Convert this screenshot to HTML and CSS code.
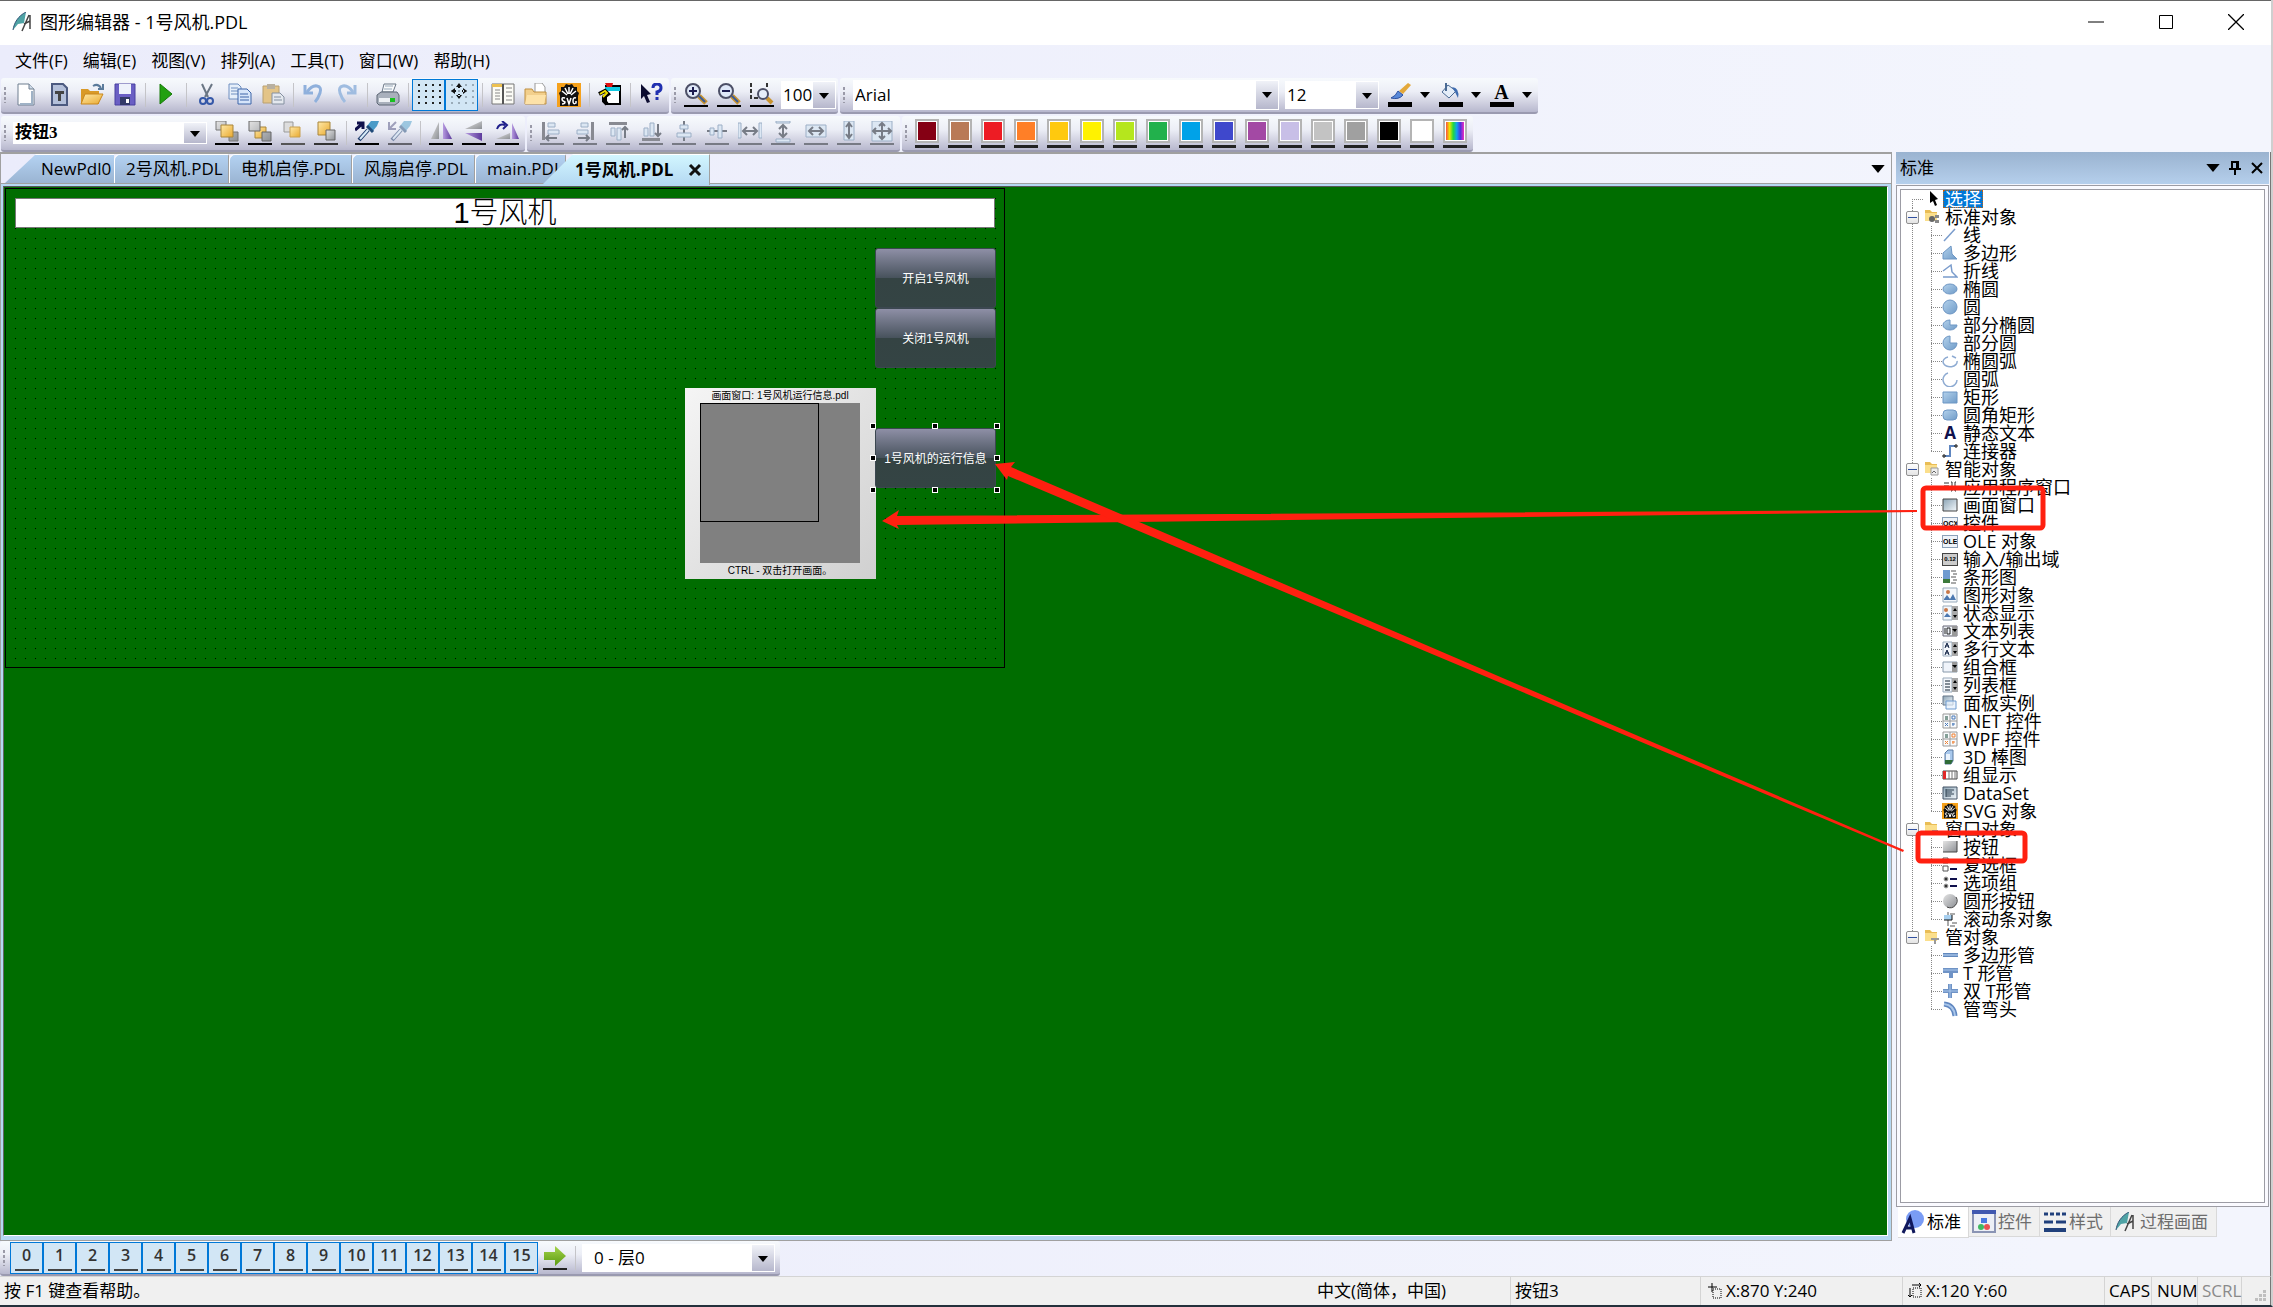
FILE: index.html
```html
<!DOCTYPE html>
<html lang="zh-CN">
<head>
<meta charset="utf-8">
<title>图形编辑器 - 1号风机.PDL</title>
<link rel="stylesheet" href="styles.css">
</head>
<body>
<svg class="defs" aria-hidden="true">
  <defs>
    <linearGradient id="blue" x1="0" y1="0" x2="1" y2="1"><stop offset="0" stop-color="#b4d2ec"/><stop offset="1" stop-color="#6f9bc8"/></linearGradient>
    <linearGradient id="gold" x1="0" y1="0" x2="1" y2="1"><stop offset="0" stop-color="#ffe9a8"/><stop offset="1" stop-color="#e9a92e"/></linearGradient>
    <linearGradient id="gray" x1="0" y1="0" x2="1" y2="1"><stop offset="0" stop-color="#e4e4e4"/><stop offset="1" stop-color="#8c8f94"/></linearGradient>
    <linearGradient id="paper" x1="0" y1="0" x2="1" y2="1"><stop offset="0" stop-color="#8ba3b4"/><stop offset="1" stop-color="#f4f9fd"/></linearGradient>
    <linearGradient id="violet" x1="0" y1="0" x2="1" y2="0"><stop offset="0" stop-color="#b79be0"/><stop offset="1" stop-color="#5c3a9c"/></linearGradient>
    <linearGradient id="leaf" x1="0" y1="0" x2="0" y2="1"><stop offset="0" stop-color="#a5d44c"/><stop offset="1" stop-color="#5a9a10"/></linearGradient>
    <linearGradient id="pipe" x1="0" y1="0" x2="0" y2="1"><stop offset="0" stop-color="#4a74ae"/><stop offset=".5" stop-color="#a9c6ea"/><stop offset="1" stop-color="#4a74ae"/></linearGradient>
    <symbol id="logo" viewBox="0 0 20 20"><path d="M1 18C2 11 6 4 14 0L12 11 6 12Z" fill="#4fa3a5"/><path d="M1 18C2 11 6 4 14 0" fill="none" stroke="#357"/><path d="M17 3L10 19M18 3V17M12 12L18 9" stroke="#444" fill="none" stroke-width="1.500"/></symbol>
    <symbol id="folder" viewBox="0 0 16 16"><path d="M1 1H6L8 3H13V12H1Z" fill="#e9bd55"/><path d="M1 4H13V12H1Z" fill="#fbdf8c"/></symbol>
    <symbol id="flower" viewBox="0 0 24 24"><path d="M0 0H24V24H0Z" fill="#f5a11c"/><path d="M3 23V13L2 10 4 8 4 4 7 4 9 1 12 2 15 1 17 4 20 4 20 8 22 10 21 13V23Z" fill="#111"/><path d="M12 11V4M11 11L8 5M13 11L16 5M10 12L5 8M14 12L19 8" stroke="#fff" stroke-width="1.500" fill="none"/><path d="M8 15Q5 14 5 16T8 19Q8 21 5 21M10 15L12 21 14 15M19 15Q16 14 16 18T19 20V18" stroke="#fff" stroke-width="1.500" fill="none"/></symbol>
    <symbol id="dropper" viewBox="0 0 24 24"><path d="M4 19L13 9" stroke="#1d3c6c" stroke-width="4"/><path d="M5 18L13 9" stroke="#d8ebf8" stroke-width="2"/><path d="M12 5L17 11 22 5 24 0H16Z" fill="#4a9bc8"/><path d="M12 5L18 11" stroke="#204a78" stroke-width="3"/></symbol>
    <symbol id="lens" viewBox="0 0 24 24"><path d="M15 13L22 20" stroke="#c8932e" stroke-width="5"/><path d="M15 13L21 19" stroke="#3a5c96" stroke-width="2"/><circle cx="9" cy="8" r="7" fill="#dfe8f8" stroke="#4c4f66" stroke-width="2"/></symbol>
    <symbol id="tri" viewBox="0 0 10 6"><path d="M0 0H10L5 6Z"/></symbol>
  </defs>
</svg>

<header class="titlebar">
  <svg class="i20"><use href="#logo"/></svg>
  <h1>图形编辑器 - 1号风机.PDL</h1>
  <button class="win" aria-label="最小化"><svg width="16" height="16"><path d="M0 8H16" stroke="#000"/></svg></button>
  <button class="win" aria-label="最大化"><svg width="16" height="16"><path d="M1.500 1.500H14.500V14.500H1.500Z" fill="none" stroke="#000"/></svg></button>
  <button class="win" aria-label="关闭"><svg width="16" height="16"><path d="M0 0L16 16M16 0L0 16" stroke="#000" stroke-width="1.300"/></svg></button>
</header>

<nav class="menu">
  <button>文件(F)</button><button>编辑(E)</button><button>视图(V)</button><button>排列(A)</button><button>工具(T)</button><button>窗口(W)</button><button>帮助(H)</button>
</nav>

<div class="bars">
  <div class="bar">
    <i class="grip"></i>
    <button class="tb" aria-label="新建"><svg viewBox="0 0 24 24"><path d="M4 1H15L20 6V22H4Z" fill="#fff" stroke="#6f7f90"/><path d="M15 1V6H20" fill="#cfdbe8" stroke="#6f7f90"/><path d="M18 8V21H6" stroke="#9fb2c6" stroke-width="2" fill="none"/></svg></button>
    <button class="tb" aria-label="模板"><svg viewBox="0 0 24 24"><path d="M5 1H16L20 5V22H5Z" fill="#b4c0da" stroke="#4c5a80" stroke-width="2"/><path d="M8 8H17V11H14V18H11V11H8Z" fill="#444"/></svg></button>
    <button class="tb" aria-label="打开"><svg viewBox="0 0 24 24"><path d="M1 6H8L10 8H19V21H1Z" fill="#d99a28"/><path d="M5 11H23L18 21H1Z" fill="url(#gold)" stroke="#c8871c"/><path d="M13 3Q18 0 21 5M23 1V6H18" stroke="#5a7a9a" stroke-width="2" fill="none"/></svg></button>
    <button class="tb" aria-label="保存"><svg viewBox="0 0 24 24"><path d="M2 1H22V22H2Z" fill="#6a5fc4" stroke="#4840a0"/><path d="M6 1H18V11H6Z" fill="#eef2fb"/><path d="M7 14H17V22H7Z" fill="#333a68"/><path d="M13 16H16V20H13Z" fill="#fff"/></svg></button>
    <i class="sep"></i>
    <button class="tb" aria-label="运行"><svg viewBox="0 0 24 24"><path d="M6 1L18 11 6 21Z" fill="#22a010" stroke="#167a08"/></svg></button>
    <i class="sep"></i>
    <button class="tb" aria-label="剪切"><svg viewBox="0 0 24 24"><path d="M7 1L13 14M17 1L10 14" stroke="#6a7684" stroke-width="2"/><circle cx="8" cy="18" r="3" fill="none" stroke="#3558a8" stroke-width="2"/><circle cx="15" cy="18" r="3" fill="none" stroke="#3558a8" stroke-width="2"/></svg></button>
    <button class="tb" aria-label="复制"><svg viewBox="0 0 24 24"><path d="M1 1H10L13 4V16H1Z" fill="#e6effa" stroke="#6f8fc0"/><path d="M3 5H10M3 8H10M3 11H10" stroke="#6f8fc0"/><path d="M10 6H19L23 10V21H10Z" fill="#d6e5fa" stroke="#3d65a8"/><path d="M12 11H20M12 14H21M12 17H21" stroke="#3d65a8"/></svg></button>
    <button class="tb" aria-label="粘贴"><svg viewBox="0 0 24 24"><path d="M2 3H18V20H2Z" fill="#e3c488" stroke="#b9a070"/><path d="M6 1H14V6H6Z" fill="#b8b0a0"/><path d="M11 10H19L23 14V21H11Z" fill="#e4e8ee" stroke="#8490a0"/><path d="M13 14H20M13 17H21" stroke="#8490a0"/></svg></button>
    <i class="sep"></i>
    <button class="tb" aria-label="撤消"><svg viewBox="0 0 24 24"><path d="M3 2V10H11" fill="none" stroke="#8fb0dc" stroke-width="3"/><path d="M5 9Q10 2 15 3T18 10 13 19" stroke="#8fb0dc" stroke-width="3" fill="none"/></svg></button>
    <button class="tb" aria-label="重做"><svg viewBox="0 0 24 24"><path d="M20 2V10H12" fill="none" stroke="#9fbce0" stroke-width="3"/><path d="M18 9Q13 2 8 3T5 10 10 19" stroke="#9fbce0" stroke-width="3" fill="none"/></svg></button>
    <i class="sep"></i>
    <button class="tb" aria-label="打印"><svg viewBox="0 0 24 24"><path d="M8 1H20L17 9H6Z" fill="#f8fafc" stroke="#6c7888"/><path d="M9 3H17M8 6H16" stroke="#9ab"/><path d="M1 12L5 9H21L23 12V19L19 22H3L1 20Z" fill="#a9b0bc" stroke="#5c6674"/><path d="M3 15H14V19H3Z" fill="#eef1f5"/><path d="M14 15H19V19H14Z" fill="#18c020"/></svg></button>
    <i class="sep"></i>
    <button class="tb on" aria-label="显示网格"><svg viewBox="0 0 24 24"><path d="M1 2H24M1 8H24M1 14H24M1 20H24" stroke="#222" stroke-width="2" stroke-dasharray="2 5"/></svg></button>
    <button class="tb on" aria-label="对齐网格"><svg viewBox="0 0 24 24"><path d="M1 2H24M1 8H24M1 14H24M1 20H24" stroke="#9aabb8" stroke-width="2" stroke-dasharray="2 5"/><path d="M9 0L12 4H6ZM9 16L12 12H6ZM1 8L5 5V11ZM17 8L13 5V11ZM8 3H10V5H8ZM8 11H10V13H8ZM4 7H6V9H4ZM12 7H14V9H12Z" fill="#111"/></svg></button>
    <i class="sep"></i>
    <button class="tb" aria-label="属性"><svg viewBox="0 0 24 24"><path d="M1 1H23V21H1Z" fill="#fbfbf6" stroke="#777"/><path d="M1 1H12V4H1Z" fill="#ecc050"/><path d="M12 1V21" stroke="#555" stroke-width="2"/><path d="M4 7H9M4 10H9M4 13H9M4 16H9M15 5H21M15 9H21M15 13H21M15 17H21" stroke="#888"/></svg></button>
    <button class="tb" aria-label="库"><svg viewBox="0 0 24 24"><path d="M11 0H18L21 4V16H11Z" fill="#fff" stroke="#999"/><path d="M1 6H8L10 9H22V21H1Z" fill="#f2cf8c" stroke="#bf9040"/><path d="M3 12H22L20 21H1Z" fill="#fde2a8"/></svg></button>
    <button class="tb" aria-label="SVG 库"><svg><use href="#flower"/></svg></button>
    <i class="sep"></i>
    <button class="tb" aria-label="动态向导"><svg viewBox="0 0 24 24"><path d="M8 3H22V21H8Z" fill="#fff" stroke="#000" stroke-width="2"/><path d="M7 4H22V8H7Z" fill="#10c8e0"/><path d="M7 0H15L14 4 9 4Z" fill="#e01010"/><path d="M1 11L7 8 10 11 6 14V18L9 21" stroke="#000" stroke-width="4" fill="none"/><path d="M2 11L7 8 9 10 5 14" stroke="#f0e000" stroke-width="2" fill="none"/></svg></button>
    <i class="sep"></i>
    <button class="tb" aria-label="直接帮助"><svg viewBox="0 0 24 24"><path d="M2 1L12 11 8 12 11 19 8 20 5 13 2 16Z" fill="#0c0c30"/><path d="M14 5Q14 1 18 1T22 5Q22 8 18 9V12M18 14V17" stroke="#2030b0" stroke-width="3" fill="none"/></svg></button>
  </div>
  <div class="bar">
    <i class="grip"></i>
    <button class="tb" aria-label="放大"><svg viewBox="0 0 24 24"><use href="#lens"/><path d="M5 8H13M9 4V12" stroke="#1c1c50" stroke-width="2"/><path d="M0 22H24V24H0Z"/></svg></button>
    <button class="tb" aria-label="缩小"><svg viewBox="0 0 24 24"><use href="#lens"/><path d="M5 8H13" stroke="#1c1c50" stroke-width="2"/><path d="M0 22H24V24H0Z"/></svg></button>
    <button class="tb" aria-label="缩放区域"><svg viewBox="0 0 24 24"><path d="M1 0V15H8M17 0V4" stroke="#333" stroke-width="2" stroke-dasharray="4 2" fill="none"/><path d="M17 15L22 20" stroke="#c8932e" stroke-width="4"/><circle cx="13" cy="11" r="5" fill="#e6edf8" stroke="#4c4f66" stroke-width="2"/><path d="M0 22H24V24H0Z"/></svg></button>
    <span class="combo zoom"><select aria-label="缩放"><option>100</option></select></span>
  </div>
  <div class="bar">
    <i class="grip"></i>
    <span class="combo font"><select aria-label="字体"><option>Arial</option></select></span>
    <span class="combo size"><select aria-label="字号"><option>12</option></select></span>
    <button class="tb split" aria-label="线颜色"><svg viewBox="0 0 24 24"><path d="M20 0L23 2 15 11 11 8Z" fill="#e3a83a"/><path d="M10 8L15 12Q11 17 3 15 8 13 10 8Z" fill="#5888d8" stroke="#2c50a0"/><path d="M0 19H24V24H0Z"/></svg><svg class="arrow"><use href="#tri"/></svg></button>
    <button class="tb split" aria-label="填充颜色"><svg viewBox="0 0 24 24"><path d="M9 2L17 8 10 15 3 9Z" fill="#e4edf8" stroke="#4a6a94"/><path d="M7 0V8" stroke="#4a6a94" stroke-width="2"/><path d="M13 4Q21 5 19 15L16 9Z" fill="#3f6cb0"/><path d="M0 19H24V24H0Z"/></svg><svg class="arrow"><use href="#tri"/></svg></button>
    <button class="tb split" aria-label="字体颜色"><span class="letter">A</span><svg class="arrow"><use href="#tri"/></svg></button>
  </div>
</div>

<div class="bars">
  <div class="bar">
    <i class="grip"></i>
    <span class="combo object"><select aria-label="对象"><option>按钮3</option></select></span>
    <button class="tb" aria-label="置于最前"><svg viewBox="0 0 24 24"><path d="M1 0H11V9H1ZM14 11H23V20H14Z" fill="url(#gray)" stroke="#777"/><path d="M6 4H18V16H6Z" fill="url(#gold)" stroke="#a8853a"/><path d="M0 22H24V24H0Z"/></svg></button>
    <button class="tb" aria-label="置于最后"><svg viewBox="0 0 24 24"><path d="M7 6H18V17H7Z" fill="url(#gold)" stroke="#a8853a"/><path d="M1 0H12V10H1ZM14 11H23V20H14Z" fill="url(#gray)" stroke="#666"/><path d="M0 22H24V24H0Z"/></svg></button>
    <button class="tb" aria-label="前移"><svg viewBox="0 0 24 24"><path d="M3 1H12V11H3Z" fill="#ddd" stroke="#999"/><path d="M9 6H19V16H9Z" fill="url(#gold)" stroke="#c8a050"/><path d="M0 22H24V24H0Z" fill="#555"/></svg></button>
    <button class="tb" aria-label="后移"><svg viewBox="0 0 24 24"><path d="M4 1H16V14H4Z" fill="url(#gold)" stroke="#a8853a"/><path d="M12 9H21V19H12Z" fill="url(#gray)" stroke="#666"/><path d="M0 22H24V24H0Z" fill="#333"/></svg></button>
    <i class="sep"></i>
    <button class="tb" aria-label="复制属性"><svg viewBox="0 0 24 24"><use href="#dropper"/><path d="M0 9L7 3M2 2H8V8" stroke="#10104c" stroke-width="3" fill="none"/><path d="M0 22H24V24H0Z"/></svg></button>
    <button class="tb dim" aria-label="分配属性"><svg viewBox="0 0 24 24"><use href="#dropper"/><path d="M8 1L2 7M1 1V8H8" stroke="#505080" stroke-width="2" fill="none"/><path d="M0 22H24V24H0Z"/></svg></button>
    <i class="sep"></i>
    <button class="tb" aria-label="水平镜像"><svg viewBox="0 0 24 24"><path d="M10 1V18H2Z" fill="url(#gray)"/><path d="M14 1V18H23Z" fill="url(#violet)"/><path d="M0 22H24V24H0Z"/></svg></button>
    <button class="tb" aria-label="垂直镜像"><svg viewBox="0 0 24 24"><path d="M3 8L20 0V8Z" fill="url(#gray)"/><path d="M3 12H20V20Z" fill="url(#violet)"/><path d="M0 22H24V24H0Z"/></svg></button>
    <button class="tb" aria-label="旋转"><svg viewBox="0 0 24 24"><path d="M15 12V18H1Z" fill="url(#gray)"/><path d="M17 2V18H24Z" fill="url(#violet)"/><path d="M2 8Q4 2 10 4M7 0L12 4 8 8" stroke="#20208c" stroke-width="2" fill="none"/><path d="M0 22H24V24H0Z"/></svg></button>
  </div>
  <div class="bar">
    <i class="grip"></i>
    <button class="tb al" aria-label="左对齐"><svg viewBox="0 0 24 24"><path class="g" d="M2 1H5V19H2Z"/><path class="b" d="M8 2H15V6H8ZM8 9H19V13H8Z"/><path class="a" d="M6 17H17M9 14L6 17 9 20"/><path class="u" d="M0 22H24V24H0Z"/></svg></button>
    <button class="tb al" aria-label="右对齐"><svg viewBox="0 0 24 24"><path class="g" d="M18 1H21V19H18Z"/><path class="b" d="M8 2H15V6H8ZM4 9H15V13H4Z"/><path class="a" d="M5 17H16M13 14L16 17 13 20"/><path class="u" d="M0 22H24V24H0Z"/></svg></button>
    <button class="tb al" aria-label="上对齐"><svg viewBox="0 0 24 24"><path class="g" d="M3 1H21V4H3Z"/><path class="b" d="M5 7H9V15H5ZM11 7H15V19H11Z"/><path class="a" d="M19 6V17M16 9L19 6 22 9"/><path class="u" d="M0 22H24V24H0Z"/></svg></button>
    <button class="tb al" aria-label="下对齐"><svg viewBox="0 0 24 24"><path class="g" d="M3 17H21V20H3Z"/><path class="b" d="M5 7H9V15H5ZM11 2H15V15H11Z"/><path class="a" d="M19 3V15M16 12L19 15 22 12"/><path class="u" d="M0 22H24V24H0Z"/></svg></button>
    <button class="tb al" aria-label="水平居中"><svg viewBox="0 0 24 24"><path class="a" d="M12 0V20"/><path class="b" d="M8 4H16V8H8ZM5 12H19V16H5Z"/><path class="u" d="M0 22H24V24H0Z"/></svg></button>
    <button class="tb al" aria-label="垂直居中"><svg viewBox="0 0 24 24"><path class="a" d="M2 10H22"/><path class="b" d="M5 7H9V14H5ZM13 4H17V17H13Z"/><path class="u" d="M0 22H24V24H0Z"/></svg></button>
    <button class="tb al" aria-label="水平等距"><svg viewBox="0 0 24 24"><path class="b" d="M0 2H3V17H0ZM21 2H24V17H21Z"/><path class="a" d="M5 10H19M9 6L5 10 9 14M15 6L19 10 15 14"/><path class="u" d="M0 22H24V24H0Z"/></svg></button>
    <button class="tb al" aria-label="垂直等距"><svg viewBox="0 0 24 24"><path class="b" d="M5 0H19V2H5ZM5 18H19V21H5Z"/><path class="a" d="M12 4V16M8 8L12 4 16 8M8 12L12 16 16 12"/><path class="u" d="M0 22H24V24H0Z"/></svg></button>
    <button class="tb al" aria-label="等宽"><svg viewBox="0 0 24 24"><path class="b" d="M2 4H22V16H2Z"/><path class="a" d="M5 10H19M9 6L5 10 9 14M15 6L19 10 15 14"/><path class="u" d="M0 22H24V24H0Z"/></svg></button>
    <button class="tb al" aria-label="等高"><svg viewBox="0 0 24 24"><path class="b" d="M7 0H17V19H7Z"/><path class="a" d="M12 2V17M9 6L12 2 15 6M9 13L12 17 15 13"/><path class="u" d="M0 22H24V24H0Z"/></svg></button>
    <button class="tb al" aria-label="等宽等高"><svg viewBox="0 0 24 24"><path class="b" d="M2 0H22V20H2Z"/><path class="a" d="M3 10H21M12 2V18M6 7L3 10 6 13M18 7L21 10 18 13M9 5L12 2 15 5M9 15L12 18 15 15"/><path class="u" d="M0 22H24V24H0Z"/></svg></button>
  </div>
  <div class="bar">
    <i class="grip"></i>
    <button class="tb sw c1" aria-label="深红"></button><button class="tb sw c2" aria-label="棕色"></button><button class="tb sw c3" aria-label="红色"></button><button class="tb sw c4" aria-label="橙色"></button><button class="tb sw c5" aria-label="金色"></button><button class="tb sw c6" aria-label="黄色"></button><button class="tb sw c7" aria-label="黄绿"></button><button class="tb sw c8" aria-label="绿色"></button><button class="tb sw c9" aria-label="天蓝"></button><button class="tb sw c10" aria-label="靛蓝"></button><button class="tb sw c11" aria-label="紫色"></button><button class="tb sw c12" aria-label="淡紫"></button><button class="tb sw c13" aria-label="浅灰"></button><button class="tb sw c14" aria-label="灰色"></button><button class="tb sw c15" aria-label="黑色"></button><button class="tb sw c16" aria-label="白色"></button><button class="tb sw c17" aria-label="更多颜色"></button>
  </div>
</div>

<main class="work">
  <section class="docs">
    <div class="tabs">
      <button class="tab slant t1">NewPdl0</button><button class="tab t2">2号风机.PDL</button><button class="tab t3">电机启停.PDL</button><button class="tab t3">风扇启停.PDL</button><button class="tab t4">main.PDL</button><button class="tab slant active">1号风机.PDL<svg width="14" height="14"><path d="M2 2L12 12M12 2L2 12" stroke="#111" stroke-width="3"/></svg></button>
      <button class="tablist" aria-label="窗口列表"><svg width="14" height="8"><use href="#tri"/></svg></button>
    </div>
    <div class="frame">
      <div class="canvas">
        <div class="pdl">
          <div class="caption">1号风机</div>
          <button class="pb open">开启1号风机</button>
          <button class="pb shut">关闭1号风机</button>
          <div class="picwin"><span>画面窗口: 1号风机运行信息.pdl</span><div class="pic"><div class="sub"></div></div><span>CTRL - 双击打开画面。</span></div>
          <button class="pb info">1号风机的运行信息</button>
          <div class="handles"><i></i><i></i><i></i><i></i><b></b><i></i><i></i><i></i><i></i></div>
        </div>
      </div>
    </div>
  </section>

  <aside class="panel">
    <header><h2>标准</h2><svg width="14" height="8"><use href="#tri"/></svg><svg width="12" height="14"><path d="M3 1H9V8H3ZM0 8H12M6 8V14M8 1V8" stroke="#000" stroke-width="2" fill="none"/></svg><svg width="14" height="14"><path d="M2 2L12 12M12 2L2 12" stroke="#000" stroke-width="2"/></svg></header>
    <div class="well"><div class="treebox">
      <ul class="tree">
        <li class="first"><svg viewBox="0 0 16 16"><path d="M4 0L12 8 9 9 11 14 9 15 7 10 4 12Z"/></svg><mark>选择</mark></li>
        <li class="grp"><i class="ex"></i><svg viewBox="0 0 16 16"><use href="#folder"/><circle cx="8" cy="10" r="3" fill="#666"/><path d="M11 6H15V9H11ZM11 11H15V14H11Z" fill="#888"/></svg>标准对象
        <ul>
          <li><svg viewBox="0 0 16 16"><path d="M2 14L13 2" stroke="#7a9ccc" stroke-width="1.500"/></svg>线</li>
          <li><svg viewBox="0 0 16 16"><path d="M1 14V8L9 1 10 9 15 14Z" fill="url(#blue)" stroke="#6d96c4"/></svg>多边形</li>
          <li><svg viewBox="0 0 16 16"><path d="M1 8L9 2 10 9 15 14H1" fill="none" stroke="#7a9ccc" stroke-width="1.500"/></svg>折线</li>
          <li><svg viewBox="0 0 16 16"><ellipse cx="8" cy="8" rx="7" ry="5" fill="url(#blue)" stroke="#6d96c4"/></svg>椭圆</li>
          <li><svg viewBox="0 0 16 16"><circle cx="8" cy="8" r="7" fill="url(#blue)" stroke="#6d96c4"/></svg>圆</li>
          <li><svg viewBox="0 0 16 16"><path d="M8 3A7 5 0 1 0 15 8H8Z" fill="url(#blue)" stroke="#6d96c4"/></svg>部分椭圆</li>
          <li><svg viewBox="0 0 16 16"><path d="M8 1A7 7 0 1 0 15 8H8Z" fill="url(#blue)" stroke="#6d96c4"/></svg>部分圆</li>
          <li><svg viewBox="0 0 16 16"><path d="M6 4A7 5 0 1 0 15 8M10 3L14 5" fill="none" stroke="#8eabd2" stroke-width="1.500"/></svg>椭圆弧</li>
          <li><svg viewBox="0 0 16 16"><path d="M6 2A7 7 0 1 0 15 9" fill="none" stroke="#8eabd2" stroke-width="1.500"/></svg>圆弧</li>
          <li><svg viewBox="0 0 16 16"><path d="M1 3H15V14H1Z" fill="url(#blue)" stroke="#6d96c4"/></svg>矩形</li>
          <li><svg viewBox="0 0 16 16"><rect x="1" y="3" width="14" height="10" rx="4" fill="url(#blue)" stroke="#6d96c4"/></svg>圆角矩形</li>
          <li><span class="ch">A</span>静态文本</li>
          <li><svg viewBox="0 0 16 16"><path d="M2 13H8V3H14" fill="none" stroke="#5f86c0" stroke-width="2"/><path d="M1 12H3V14H1ZM13 2H15V4H13Z" fill="#fff" stroke="#111"/></svg>连接器</li>
        </ul></li>
        <li class="grp"><i class="ex"></i><svg viewBox="0 0 16 16"><use href="#folder"/><path d="M7 7H14V14H7Z" fill="#eee" stroke="#999"/><path d="M8 12L10 10 12 12" stroke="#666" fill="none"/></svg>智能对象
        <ul>
          <li><svg viewBox="0 0 16 16"><path d="M2 4H7M2 7H7M2 10H7M9 3H10V12H9M14 3H13V12H14" stroke="#333" fill="none"/></svg>应用程序窗口</li>
          <li><svg viewBox="0 0 16 16"><path d="M1 2H15V14H1Z" fill="url(#paper)" stroke="#444"/></svg>画面窗口</li>
          <li><span class="tag">OCX</span>控件</li>
          <li><span class="tag">OLE</span>OLE 对象</li>
          <li><span class="tag io">0.12</span>输入/输出域</li>
          <li><svg viewBox="0 0 16 16"><path d="M1 1H8V10H1Z" fill="#6f9bd0"/><path d="M1 10H8V14H1Z" fill="#3c7a3c"/><path d="M9 2H14M11 5H15M9 8H14M11 11H15M9 14H14" stroke="#555"/></svg>条形图</li>
          <li><svg viewBox="0 0 16 16"><path d="M1 1H15V15H1Z" fill="#f4f7fb" stroke="#9ab"/><path d="M2 12L5 8 8 12 11 7 14 13H2Z" fill="#4c78b0"/><circle cx="6" cy="5" r="2" fill="#c87848"/></svg>图形对象</li>
          <li><svg viewBox="0 0 16 16"><path d="M1 1H10V15H1Z" fill="#f4f7fb" stroke="#9ab"/><path d="M2 12L5 8 9 12Z" fill="#4c78b0"/><circle cx="4" cy="5" r="2" fill="#c87848"/><path d="M10 1H16V15H10Z" fill="#aaa"/><path d="M11 6L13 3 15 6ZM11 10H15L13 13Z"/></svg>状态显示</li>
          <li><svg viewBox="0 0 16 16"><path d="M1 3H15V13H1Z" fill="#eef2f7" stroke="#667"/><path d="M3 5V11M5 5H8V11H5Z" stroke="#222" fill="none"/><path d="M10 3H15V13H10Z" fill="#999"/><path d="M10 6H15L13 9Z"/></svg>文本列表</li>
          <li><svg viewBox="0 0 16 16"><path d="M1 1H10V15H1Z" fill="#f4f7fb" stroke="#9ab"/><path d="M3 7L5 2 7 7M3 5H7M3 14L5 9 7 14M3 12H7" stroke="#124" fill="none"/><path d="M10 1H16V15H10Z" fill="#aaa"/><path d="M11 6L13 3 15 6ZM11 10H15L13 13Z"/></svg>多行文本</li>
          <li><svg viewBox="0 0 16 16"><path d="M1 3H15V13H1Z" fill="#f0f4fa" stroke="#89a"/><path d="M10 3H15V13H10Z" fill="#999"/><path d="M10 6H15L13 9Z"/></svg>组合框</li>
          <li><svg viewBox="0 0 16 16"><path d="M1 1H10V15H1Z" fill="#f4f7fb" stroke="#9ab"/><path d="M3 4H8M3 7H8M3 10H8M3 13H8" stroke="#123"/><path d="M10 1H16V15H10Z" fill="#aaa"/><path d="M11 6L13 3 15 6ZM11 10H15L13 13Z"/></svg>列表框</li>
          <li><svg viewBox="0 0 16 16"><path d="M1 1H11V10H1Z" fill="url(#paper)" stroke="#678"/><path d="M4 6H14V14H4Z" fill="#e4effc" fill-opacity=".7" stroke="#6f9bd0"/></svg>面板实例</li>
          <li><svg viewBox="0 0 16 16"><path d="M1 1H15V15H1ZM8 1V15M1 8H15" fill="#f8fafc" stroke="#999"/><path d="M3 4H6M3 6H6" stroke="#143"/><path d="M10 3H13V6H10ZM10 11H13M11 10V13M3 10L6 13M6 10L3 13" stroke="#4878b8" fill="none"/></svg>.NET 控件</li>
          <li><svg viewBox="0 0 16 16"><path d="M1 1H15V15H1ZM8 1V15M1 8H15" fill="#f8fafc" stroke="#999"/><path d="M3 4H6M3 6H6" stroke="#143"/><path d="M10 3H13V6H10ZM10 11H13M11 10V13M3 10L6 13M6 10L3 13" stroke="#f08030" fill="none"/></svg>WPF 控件</li>
          <li><svg viewBox="0 0 16 16"><path d="M3 4L6 1H11V12L9 15H3Z" fill="#a8c8ec" stroke="#5878a0"/><path d="M4 5H8V11H4Z" fill="#eaf3fc"/><path d="M3 11H11L9 15H3Z" fill="#2f6b38"/></svg>3D 棒图</li>
          <li><svg viewBox="0 0 16 16"><path d="M1 4H15V12H1Z" fill="#fff" stroke="#444"/><path d="M1 4H4V12H1Z" fill="#e02828"/><path d="M7 4V12M10 4V12M13 4V12" stroke="#777"/></svg>组显示</li>
          <li><svg viewBox="0 0 16 16"><path d="M1 2H15V14H1Z" fill="url(#paper)" stroke="#456"/><path d="M4 4V12M4 5H12M4 7H10M4 9H12M4 11H9" stroke="#345"/></svg>DataSet</li>
          <li><svg viewBox="0 0 16 16"><use href="#flower"/></svg>SVG 对象</li>
        </ul></li>
        <li class="grp"><i class="ex"></i><svg viewBox="0 0 16 16"><use href="#folder"/><path d="M8 9H14V13H8Z" fill="#999"/></svg>窗口对象
        <ul>
          <li><svg viewBox="0 0 16 16"><path d="M1 2H15V13H1Z" fill="url(#gray)"/><path d="M1 13H15V2" fill="none" stroke="#444"/></svg>按钮</li>
          <li><svg viewBox="0 0 16 16"><path d="M1 1H6V6H1ZM1 9H6V14H1Z" fill="#fff" stroke="#555"/><path d="M8 4H15M8 12H15" stroke="#10104c" stroke-width="2"/></svg>复选框</li>
          <li><svg viewBox="0 0 16 16"><circle cx="4" cy="4" r="2" fill="#333" stroke="#aaa"/><circle cx="4" cy="11" r="2" fill="#333" stroke="#aaa"/><path d="M8 4H15M8 11H15" stroke="#10104c" stroke-width="2"/></svg>选项组</li>
          <li><svg viewBox="0 0 16 16"><circle cx="8" cy="8" r="7" fill="url(#gray)"/><path d="M14 4A7 7 0 0 1 5 14" fill="none" stroke="#444"/></svg>圆形按钮</li>
          <li><svg viewBox="0 0 16 16"><path d="M6 1V15M8 3H13M10 12H15M8 15H13" stroke="#aaa" stroke-width="2"/><path d="M2 4H10V9H2Z" fill="#a8d0f0"/><path d="M2 9H10V4" stroke="#111" fill="none"/></svg>滚动条对象</li>
        </ul></li>
        <li class="grp"><i class="ex"></i><svg viewBox="0 0 16 16"><use href="#folder"/><path d="M7 10H15M11 10V15" stroke="#999" stroke-width="2"/></svg>管对象
        <ul>
          <li><svg viewBox="0 0 16 16"><path d="M1 6H16V10H1Z" fill="url(#pipe)"/></svg>多边形管</li>
          <li><svg viewBox="0 0 16 16"><path d="M1 3H16V8H11V13H7V8H1Z" fill="#6f93c6"/><path d="M1 5H16" stroke="#a9c6ea"/></svg>T 形管</li>
          <li><svg viewBox="0 0 16 16"><path d="M6 1H10V6H16V10H10V15H6V10H1V6H6Z" fill="#6f93c6"/><path d="M1 8H16M8 1V15" stroke="#a9c6ea"/></svg>双 T形管</li>
          <li><svg viewBox="0 0 16 16"><path d="M2 3Q12 4 13 15" fill="none" stroke="#5f86c0" stroke-width="5"/><path d="M2 3Q12 4 13 15" fill="none" stroke="#a9c6ea" stroke-width="2"/></svg>管弯头</li>
        </ul></li>
      </ul>
    </div></div>
    <div class="ptabs">
      <button class="cur"><svg viewBox="0 0 24 24"><circle cx="14" cy="9" r="9" fill="#7a9cf4"/><path d="M2 23L9 8 13 23M4 18H12" stroke="#10185c" stroke-width="3" fill="none"/></svg>标准</button>
      <button><svg viewBox="0 0 24 24"><path d="M1 1H23V22H1Z" fill="#eceff6" stroke="#8a94b4" stroke-width="2"/><path d="M0 0H24V4H0Z" fill="#4058b0"/><path d="M9 8H15V13H9Z" fill="#4878e0"/><circle cx="9" cy="17" r="3" fill="#40b860"/><circle cx="15" cy="17" r="3" fill="#e85050"/></svg>控件</button>
      <button><svg viewBox="0 0 24 24"><path d="M1 4H23" stroke="#20407c" stroke-width="3" stroke-dasharray="4 2"/><path d="M1 12H10M13 12H23" stroke="#20407c" stroke-width="3"/><path d="M1 20H23" stroke="#20407c" stroke-width="4"/></svg>样式</button>
      <button class="wide"><svg><use href="#logo"/></svg>过程画面</button>
    </div>
  </aside>
</main>

<div class="bars layers">
  <div class="bar">
    <i class="grip"></i>
    <div class="lays"><button>0</button><button>1</button><button>2</button><button>3</button><button>4</button><button>5</button><button>6</button><button>7</button><button>8</button><button>9</button><button>10</button><button>11</button><button>12</button><button>13</button><button>14</button><button>15</button></div>
    <button class="tb" aria-label="应用图层"><svg viewBox="0 0 24 24"><path d="M1 6H12V0L23 10 12 20V14H1Z" fill="url(#leaf)"/><path d="M0 22H24V24H0Z" fill="#222"/></svg></button>
    <i class="sep"></i>
    <span class="combo layer"><select aria-label="图层"><option>0 - 层0</option></select></span>
  </div>
</div>

<footer class="status">
  <span class="help">按 F1 键查看帮助。</span>
  <span class="lang">中文(简体，中国)</span>
  <span class="obj">按钮3</span>
  <span class="pos"><svg width="14" height="16"><path d="M0 4H9M4 0V9" stroke="#000"/><path d="M5 6H13V15H5V6" fill="none" stroke="#000" stroke-dasharray="1 1"/></svg>X:870 Y:240</span>
  <span class="dim2"><svg width="14" height="16"><path d="M4 2H13M11 0L13 2 11 4M2 5V14M0 12L2 14 4 12" stroke="#000" fill="none"/><path d="M5 5H13V14H5V5" fill="none" stroke="#000" stroke-dasharray="1 1"/></svg>X:120 Y:60</span>
  <span class="caps">CAPS</span><span class="num">NUM</span><span class="scrl">SCRL</span>
  <span class="resize"><svg width="12" height="12"><path d="M8 0H11V3H8ZM4 4H7V7H4ZM8 4H11V7H8ZM0 8H3V11H0ZM4 8H7V11H4ZM8 8H11V11H8Z" fill="#bfbfbf"/></svg></span>
</footer>

<svg class="notes" width="2060" height="880" aria-hidden="true">
  <path d="M882 521L899 510 897 516 1917 510V512L897 525 899 529Z"/>
  <path d="M995 464L1015 462 1011 467 1904 850 1903 852 1008 476 1007 480Z"/>
  <rect x="1923" y="488" width="120" height="40" rx="3"/>
  <rect x="1918" y="833" width="107" height="28" rx="3"/>
</svg>
</body>
</html>
```
FILE: styles.css
```css
* { box-sizing: border-box; }
body {
  margin: 0;
  min-height: 100vh;
  display: flex;
  flex-direction: column;
  position: relative;
  font: 17px/24px "Open Sans", "Noto Sans CJK SC", sans-serif;
  color: #000;
  background: linear-gradient(90deg, #ebecfb, #f3f5fd 90%);
  border-right: 2px solid #cfcfcf;
  border-bottom: 2px solid #24303c;
}
button, select { font: inherit; color: inherit; border: 0; padding: 0; margin: 0; background: none; border-radius: 0; }
h1, h2 { margin: 0; font-weight: 400; font-size: 18px; }
svg { display: block; flex: none; }
.defs { position: absolute; width: 0; height: 0; }

.titlebar { height: 45px; flex: none; display: flex; align-items: center; padding: 0 0 2px 12px; background: #fff; border-top: 1px solid #666; }
.titlebar h1 { flex: 1; margin-left: 8px; }
.i20 { width: 20px; height: 20px; }
.win { width: 70px; height: 42px; display: flex; align-items: center; justify-content: center; }

.menu { height: 33px; flex: none; display: flex; gap: 15px; padding: 0 15px 2px; align-items: center; }

.bars { display: flex; gap: 2px; padding-left: 1px; height: 36px; flex: none; }
.bars + .bars { margin-top: 2px; }
.bar {
  display: flex;
  align-items: center;
  padding-right: 2px;
  border-bottom: 2px solid #9a9ab0;
  border-radius: 3px;
  background: linear-gradient(#f7fafd, #eceef6 40%, #b8b8ce);
}
.grip { width: 2px; height: 16px; margin: 0 3px; background: repeating-linear-gradient(#9a9aa8 0 3px, transparent 3px 5px); }
.tb { width: 33px; height: 32px; display: flex; align-items: center; justify-content: center; }
.tb svg { width: 24px; height: 24px; }
.tb.on { background: #d2e6f5; border: 1px solid #0078d7; }
.tb.dim svg { opacity: .5; }
.tb.split { width: 51px; gap: 8px; }
.tb .arrow { width: 10px; height: 6px; }
.letter { width: 24px; height: 24px; border-bottom: 5px solid #000; font: bold 20px/18px "Liberation Serif", serif; text-align: center; }
.sep { width: 1px; height: 24px; margin: 0 3px 0 4px; background: #c4c4c8; }
.al .g { fill: #888a92; }
.al .b { fill: #dce7f3; stroke: #9cafc6; }
.al .a { fill: none; stroke: #777c86; stroke-width: 2; }
.al .u { fill: #777a84; }

.combo { position: relative; height: 28px; background: #fff; border: 1px solid #fff; }
.combo select { appearance: none; width: 100%; height: 100%; padding: 0 22px 0 1px; outline: 0; }
.combo::before { content: ""; position: absolute; right: 0; top: 0; bottom: 0; width: 22px; background: linear-gradient(#f0f2f8, #b6b7cc); pointer-events: none; }
.combo::after { content: ""; position: absolute; right: 6px; top: 11px; border: 5px solid transparent; border-top: 6px solid #000; border-bottom: 0; pointer-events: none; }
.zoom { width: 55px; margin-left: 3px; }
.zoom select { padding-right: 0; }
.font { width: 426px; height: 30px; margin: 0 6px 0 5px; }
.size { width: 94px; margin-right: 4px; }
.object { width: 194px; height: 22px; margin: 0 3px 0 4px; font: bold 17px/20px "Liberation Serif", "Noto Sans CJK SC", serif; }
.object::after { top: 8px; }
.layer { width: 193px; margin: 0 3px; }
.layer select { padding-left: 11px; }

.sw { background: linear-gradient(#222, #222) 50% 28px / 24px 3px no-repeat; padding-bottom: 4px; }
.sw::before { content: ""; width: 18px; height: 18px; border: 1px solid #fff; outline: 2px solid #b4b4b4; background: var(--c); }
.c1 { --c: #850014; } .c2 { --c: #b97a57; } .c3 { --c: #ed1c24; } .c4 { --c: #ff7f27; }
.c5 { --c: #ffc90e; } .c6 { --c: #fff200; } .c7 { --c: #b5e61d; } .c8 { --c: #22b14c; }
.c9 { --c: #00a2e8; } .c10 { --c: #3f48cc; } .c11 { --c: #a349a4; } .c12 { --c: #c8bfe7; }
.c13 { --c: #c3c3c3; } .c14 { --c: #a0a0a0; } .c15 { --c: #000; } .c16 { --c: #fff; }
.c17 { --c: linear-gradient(90deg, #ff5040, #e8e800, #20d840, #10a0f0, #5030e0, #f030c0); }

.work { flex: 1; display: flex; gap: 4px; padding-right: 1px; border-right: 1px solid #777; }
.docs { flex: 1; display: flex; flex-direction: column; border: 1px solid #a0a0a0; border-top-width: 2px; }
.tabs { height: 30px; flex: none; display: flex; align-items: stretch; padding-left: 4px; border-bottom: 1px solid #a0a0a0; }
.tab { position: relative; z-index: 0; text-align: left; padding-left: 11px; background: linear-gradient(#b4d2f2, #9ab4d2); border: 1px solid #fff; border-right: 1px solid #a0a0a0; border-bottom: 0; border-radius: 6px 2px 0 0; white-space: nowrap; }
.t1 { width: 109px; }
.t2 { width: 115px; }
.t3 { width: 123px; }
.t4 { width: 91px; }
.tab.slant { background: none; border: 0; }
.tab.t1 { padding-left: 36px; }
.tab.slant::before { content: ""; position: absolute; z-index: -1; inset: 0; background: linear-gradient(#b4d2f2, #9ab4d2); clip-path: polygon(31px 0, 100% 0, 100% 100%, 0 100%); border-top: 1px solid #fff; }
.tab.active { display: flex; align-items: center; justify-content: space-between; width: 168px; height: 31px; margin-left: -24px; padding: 0 8px 0 33px; font-weight: 700; z-index: 1; }
.tab.active::before { background: linear-gradient(#d2f6ff, #b4d8f2); border-right: 1px solid #a0a0a0; }
.tablist { margin-left: auto; padding: 0 6px; }
.frame { flex: 1; display: flex; padding: 2px 3px 4px 2px; background: #b5d8f2; }
.canvas { flex: 1; background: #006d00; border: 1px solid #fff; border-top-color: #555; border-left-color: #666; padding: 1px; }
.pdl {
  position: relative;
  width: 1000px;
  height: 480px;
  border: 1px solid #000;
  background: linear-gradient(90deg, #006d00 9px, transparent 9px) 0 0 / 10px 10px, linear-gradient(#006d00 9px, #000 9px) 0 0 / 10px 10px;
}
.caption { position: absolute; left: 9px; top: 9px; width: 980px; height: 30px; background: #fff; border: 1px solid #777; font: 29px/28px "Liberation Sans", "Noto Sans CJK SC", sans-serif; font-weight: 300; text-align: center; }
.pb { position: absolute; left: 869px; width: 121px; height: 60px; padding-top: 2px; color: #fff; font: 12px/16px "Liberation Sans", "Noto Sans CJK SC", sans-serif; border: 1px solid #3b4750; border-radius: 3px; background: linear-gradient(#8e8fa6, #47525c 50%, #344343 50%, #344444); }
.open { top: 59px; }
.shut { top: 119px; }
.info { top: 239px; }
.picwin { position: absolute; left: 679px; top: 199px; width: 191px; height: 191px; padding-right: 1px; display: flex; flex-direction: column; align-items: center; background: linear-gradient(135deg, #f5f5f5, #d0d0d0); font: 10px/15px "Liberation Sans", "Noto Sans CJK SC", sans-serif; }
.pic { width: 160px; height: 160px; background: #808080; }
.sub { width: 119px; height: 119px; border: 1px solid #000; }
.handles { position: absolute; left: 864px; top: 234px; width: 130px; height: 70px; display: grid; grid-template-columns: repeat(3, 6px); grid-template-rows: repeat(3, 6px); justify-content: space-between; align-content: space-between; pointer-events: none; }
.handles i { background: #000; border: 1px solid #fff; }

.panel { width: 373px; flex: none; display: flex; flex-direction: column; }
.panel > header { height: 32px; flex: none; display: flex; align-items: center; gap: 9px; padding: 0 5px 0 4px; background: linear-gradient(#9ab3d0, #b5cfec); }
.panel h2 { flex: 1; font-size: 17px; }
.well { flex: 1; display: flex; margin-top: 1px; padding: 3px; border: 1px solid #9c9ca4; background: #fafaff; }
.treebox { flex: 1; background: #fff; border: 1px solid #9c9ca4; padding: 0 4px; }
.tree, .tree ul { list-style: none; margin: 0; padding: 0; }
.tree { font-size: 18px; line-height: 18px; }
.tree svg { width: 16px; height: 16px; }
.tree li { display: flex; align-items: center; height: 18px; white-space: nowrap; }
.tree > li {
  padding-left: 1px;
  background: repeating-linear-gradient(#888 0 1px, transparent 1px 2px) 7px 0 / 1px 100% no-repeat;
}
.tree .first { padding-left: 21px; background: repeating-linear-gradient(#888 0 1px, transparent 1px 2px) 7px 9px / 1px 100% no-repeat, repeating-linear-gradient(90deg, #888 0 1px, transparent 1px 2px) 7px 9px / 12px 1px no-repeat; }
.first mark { background: #0078d7; color: #fff; margin-left: 1px; padding: 0 2px; outline: 1px dotted #c06010; outline-offset: -1px; }
.tree .grp { display: grid; grid-template-columns: 13px 16px 1fr; column-gap: 5px; height: auto; align-items: center; }
.tree .grp:last-child { background-size: 1px 9px; }
.tree .grp ul { grid-column: 1 / -1; margin-left: 25px; background: repeating-linear-gradient(#888 0 1px, transparent 1px 2px) 0 0 / 1px calc(100% - 9px) no-repeat; }
.tree .grp ul li { padding-left: 11px; gap: 5px; background: repeating-linear-gradient(90deg, #888 0 1px, transparent 1px 2px) 0 9px / 11px 1px no-repeat; }
.ex { width: 13px; height: 13px; border: 1px solid #919191; border-radius: 2px; background: linear-gradient(#3050a0, #3050a0) 50% 50% / 9px 1px no-repeat, linear-gradient(#fff, #e4e4e4); }
.ch { width: 16px; font-weight: 700; font-size: 17px; text-align: center; color: #10104c; }
.tag { width: 16px; height: 13px; border: 1px solid #8ba0b8; background: #eef3f9; font: bold 7px/11px "Liberation Sans", sans-serif; text-align: center; overflow: hidden; }
.io { border-color: #444; background: #ccc; font-size: 6px; }

.ptabs { height: 34px; flex: none; display: flex; padding-left: 2px; align-items: flex-start; }
.ptabs button { width: 71px; height: 30px; display: flex; align-items: center; gap: 2px; padding-left: 3px; color: #6d6d6d; background: #f0f0f0; border: solid #d9d9d9; border-width: 0 1px 1px 0; }
.ptabs .cur { background: #fff; color: #000; height: 31px; }
.ptabs .wide { width: 106px; gap: 5px; padding-left: 4px; }
.ptabs svg { width: 24px; height: 24px; }
.ptabs .wide svg { width: 20px; height: 20px; }

.layers { height: 35px; padding-left: 0; border-right: 1px solid #777; }
.lays { display: flex; margin-left: 2px; }
.lays button { width: 33px; height: 32px; background: linear-gradient(#444, #444) 50% 26px / 24px 2px no-repeat #d2e6f5; border: 1px solid #0078d7; font-size: 16px; font-weight: 600; line-height: 20px; color: #333; padding-bottom: 6px; }

.status { height: 29px; flex: none; display: flex; background: #f0f0f0; border-top: 1px solid #d4d4d4; border-right: 1px solid #777; line-height: 28px; padding-left: 4px; white-space: nowrap; }
.status span { border-right: 1px solid #d4d4d4; display: flex; align-items: center; gap: 4px; }
.status .help { flex: 1; border: 0; }
.lang { width: 194px; }
.obj { width: 190px; padding-left: 4px; }
.pos { width: 202px; padding-left: 7px; }
.dim2 { width: 202px; padding-left: 5px; }
.caps { width: 47px; padding-left: 4px; }
.num { width: 46px; padding-left: 5px; }
.scrl { width: 44px; padding-left: 4px; color: #8a8a8a; }
.status .resize { width: 28px; border: 0; justify-content: flex-end; align-items: flex-end; padding: 0 3px 3px 0; }

.notes { position: absolute; left: 0; top: 0; pointer-events: none; fill: #ff2010; }
.notes rect { fill: none; stroke: #ff2010; stroke-width: 5; }
```
